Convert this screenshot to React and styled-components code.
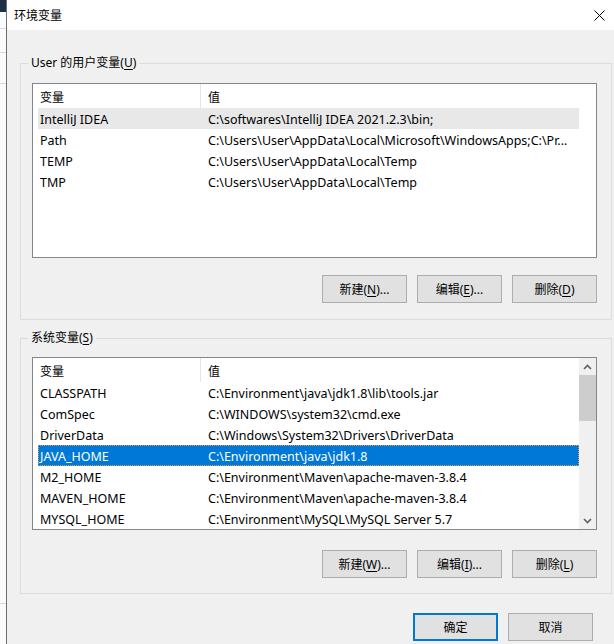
import React from 'react';
import styled, {createGlobalStyle} from 'styled-components';

const GlobalStyle = createGlobalStyle`
    html, body {
        margin: 0;
        padding: 0;
        background: #f0f0f0;
    }
    body {
        font-family: "Noto Sans", "Noto Sans CJK SC", sans-serif;
        font-size: 12px;
        color: #000;
    }
`;

const Screen = styled.div`
    display: flex;
    width: 614px;
    height: 644px;
    overflow: hidden;
`;

// strip of the window sitting behind the dialog
const BackStrip = styled.div`
    width: 6px;
    flex-shrink: 0;
    display: flex;
    flex-direction: column;
    background: #fbfbfb;
`;

const StripBlock = styled.div`
    height: ${p => p.h}px;
    background: ${p => p.bg || 'transparent'};
    border-bottom: ${p => p.line ? '1px solid #d9d9d9' : 'none'};
`;

const Dialog = styled.div`
    flex: 1;
    display: flex;
    flex-direction: column;
    background: #f0f0f0;
    border-left: 1px solid #6f6f6f;
`;

const TitleBar = styled.div`
    height: 30px;
    flex-shrink: 0;
    display: flex;
    align-items: center;
    justify-content: space-between;
    padding: 0 0 0 7px;
    background: #fff;
    font-size: 12px;
`;

const CloseBox = styled.div`
    width: 20px;
    display: flex;
    align-items: center;
    justify-content: flex-start;
    padding-top: 1px;
`;

const Body = styled.div`
    flex: 1;
    display: flex;
    flex-direction: column;
    padding: 33px 0 0 13px;
`;

const Group = styled.div`
    display: flex;
    flex-direction: column;
    border: 1px solid #dcdcdc;
    padding: 0 14px ${p => p.bottom}px 11px;
    margin-top: ${p => p.top || 0}px;
    width: 592px;
    box-sizing: border-box;
`;

const Legend = styled.div`
    align-self: flex-start;
    margin: -9px 0 0 -4px;
    padding: 0 3px;
    line-height: 16px;
    background: #f0f0f0;
`;

const Key = styled.span`
    text-decoration: underline;
    text-underline-offset: 2px;
`;

const ListBox = styled.div`
    margin-top: ${p => p.top}px;
    height: ${p => p.h}px;
    box-sizing: border-box;
    border: 1px solid #82878f;
    background: #fff;
    display: flex;
    overflow: hidden;
`;

const ListInner = styled.div`
    width: 546px;
    display: flex;
    flex-direction: column;
`;

const Header = styled.div`
    height: 24px;
    flex-shrink: 0;
    display: flex;
    align-items: center;
`;

const HeadCell = styled.div`
    width: ${p => p.w ? `${p.w}px` : 'auto'};
    flex: ${p => p.w ? 'none' : 1};
    height: 100%;
    display: flex;
    align-items: center;
    box-sizing: border-box;
    padding: 1px 0 0 7px;
    border-right: ${p => p.sep ? '1px solid #e5e5e5' : 'none'};
`;

const Row = styled.div`
    height: 21px;
    margin-left: 5px;
    display: flex;
    align-items: center;
    box-sizing: border-box;
    padding-top: 1px;
    white-space: nowrap;
    font-size: 12.5px;
    background: ${p => p.selected ? '#0078d7' : p.inactive ? '#e8e8e8' : 'transparent'};
    color: ${p => p.selected ? '#fff' : '#000'};
    border: 1px dotted ${p => p.selected ? '#e29a4f' : 'transparent'};
`;

const NameCell = styled.div`
    width: 168px;
    flex-shrink: 0;
    padding-left: 1px;
`;

const ValueCell = styled.div`
    flex: 1;
    overflow: hidden;
`;

const ScrollBar = styled.div`
    width: 17px;
    margin-left: auto;
    display: flex;
    flex-direction: column;
    background: #f0f0f0;
`;

const ScrollArrow = styled.div`
    height: 17px;
    display: flex;
    align-items: center;
    justify-content: center;
`;

const Thumb = styled.div`
    height: 46px;
    background: #cdcdcd;
`;

const Track = styled.div`
    flex: 1;
`;

const ButtonRow = styled.div`
    display: flex;
    justify-content: flex-end;
    gap: 10px;
    margin-top: ${p => p.top}px;
    padding-right: ${p => p.right || 0}px;
`;

const Button = styled.div`
    width: 85px;
    height: 28px;
    box-sizing: border-box;
    display: flex;
    align-items: center;
    justify-content: center;
    background: #e1e1e1;
    border: ${p => p.primary ? '2px solid #0078d7' : '1px solid #adadad'};
`;

const Chevron = ({down}) => (
    <svg width="9" height="6" viewBox="0 0 9 6">
        <path d={down ? 'M1 1l3.5 3.5L8 1' : 'M1 5l3.5-3.5L8 5'} fill="none" stroke="#606060" strokeWidth="1.6"/>
    </svg>
);

const userVars = [
    ['IntelliJ IDEA', 'C:\\softwares\\IntelliJ IDEA 2021.2.3\\bin;'],
    ['Path', 'C:\\Users\\User\\AppData\\Local\\Microsoft\\WindowsApps;C:\\Pr...'],
    ['TEMP', 'C:\\Users\\User\\AppData\\Local\\Temp'],
    ['TMP', 'C:\\Users\\User\\AppData\\Local\\Temp'],
];

const systemVars = [
    ['CLASSPATH', 'C:\\Environment\\java\\jdk1.8\\lib\\tools.jar'],
    ['ComSpec', 'C:\\WINDOWS\\system32\\cmd.exe'],
    ['DriverData', 'C:\\Windows\\System32\\Drivers\\DriverData'],
    ['JAVA_HOME', 'C:\\Environment\\java\\jdk1.8'],
    ['M2_HOME', 'C:\\Environment\\Maven\\apache-maven-3.8.4'],
    ['MAVEN_HOME', 'C:\\Environment\\Maven\\apache-maven-3.8.4'],
    ['MYSQL_HOME', 'C:\\Environment\\MySQL\\MySQL Server 5.7'],
];

function VarList({rows, top, h, selected, inactive, scroll}) {
    return (
        <ListBox top={top} h={h}>
            <ListInner>
                <Header>
                    <HeadCell w={168} sep>变量</HeadCell>
                    <HeadCell>值</HeadCell>
                </Header>
                {rows.map(([name, value], i) => (
                    <Row key={name} selected={i === selected} inactive={i === inactive}>
                        <NameCell>{name}</NameCell>
                        <ValueCell>{value}</ValueCell>
                    </Row>
                ))}
            </ListInner>
            {scroll && (
                <ScrollBar>
                    <ScrollArrow><Chevron/></ScrollArrow>
                    <Thumb/>
                    <Track/>
                    <ScrollArrow><Chevron down/></ScrollArrow>
                </ScrollBar>
            )}
        </ListBox>
    );
}

export default function App() {
    return (
        <Screen>
            <GlobalStyle/>
            <BackStrip>
                <StripBlock h={12} bg={'#1b3148'}/>
                <StripBlock h={16} line/>
                <StripBlock h={23} line/>
                <StripBlock h={30} line/>
                <StripBlock h={519} line/>
            </BackStrip>
            <Dialog>
                <TitleBar>
                    <span>环境变量</span>
                    <CloseBox>
                        <svg width="11" height="11" viewBox="0 0 11 11">
                            <path d="M0.5 0.5l10 10M10.5 0.5l-10 10" stroke="#000" strokeWidth="1"/>
                        </svg>
                    </CloseBox>
                </TitleBar>
                <Body>
                    <Group bottom={16}>
                        <Legend>User 的用户变量(<Key>U</Key>)</Legend>
                        <VarList rows={userVars} top={12} h={175} inactive={0}/>
                        <ButtonRow top={17}>
                            <Button>新建(<Key>N</Key>)...</Button>
                            <Button>编辑(<Key>E</Key>)...</Button>
                            <Button>删除(<Key>D</Key>)</Button>
                        </ButtonRow>
                    </Group>
                    <Group top={18} bottom={15}>
                        <Legend>系统变量(<Key>S</Key>)</Legend>
                        <VarList rows={systemVars} top={11} h={173} selected={3} scroll/>
                        <ButtonRow top={20}>
                            <Button>新建(<Key>W</Key>)...</Button>
                            <Button>编辑(<Key>I</Key>)...</Button>
                            <Button>删除(<Key>L</Key>)</Button>
                        </ButtonRow>
                    </Group>
                    <ButtonRow top={19} right={21}>
                        <Button primary>确定</Button>
                        <Button>取消</Button>
                    </ButtonRow>
                </Body>
            </Dialog>
        </Screen>
    );
}
